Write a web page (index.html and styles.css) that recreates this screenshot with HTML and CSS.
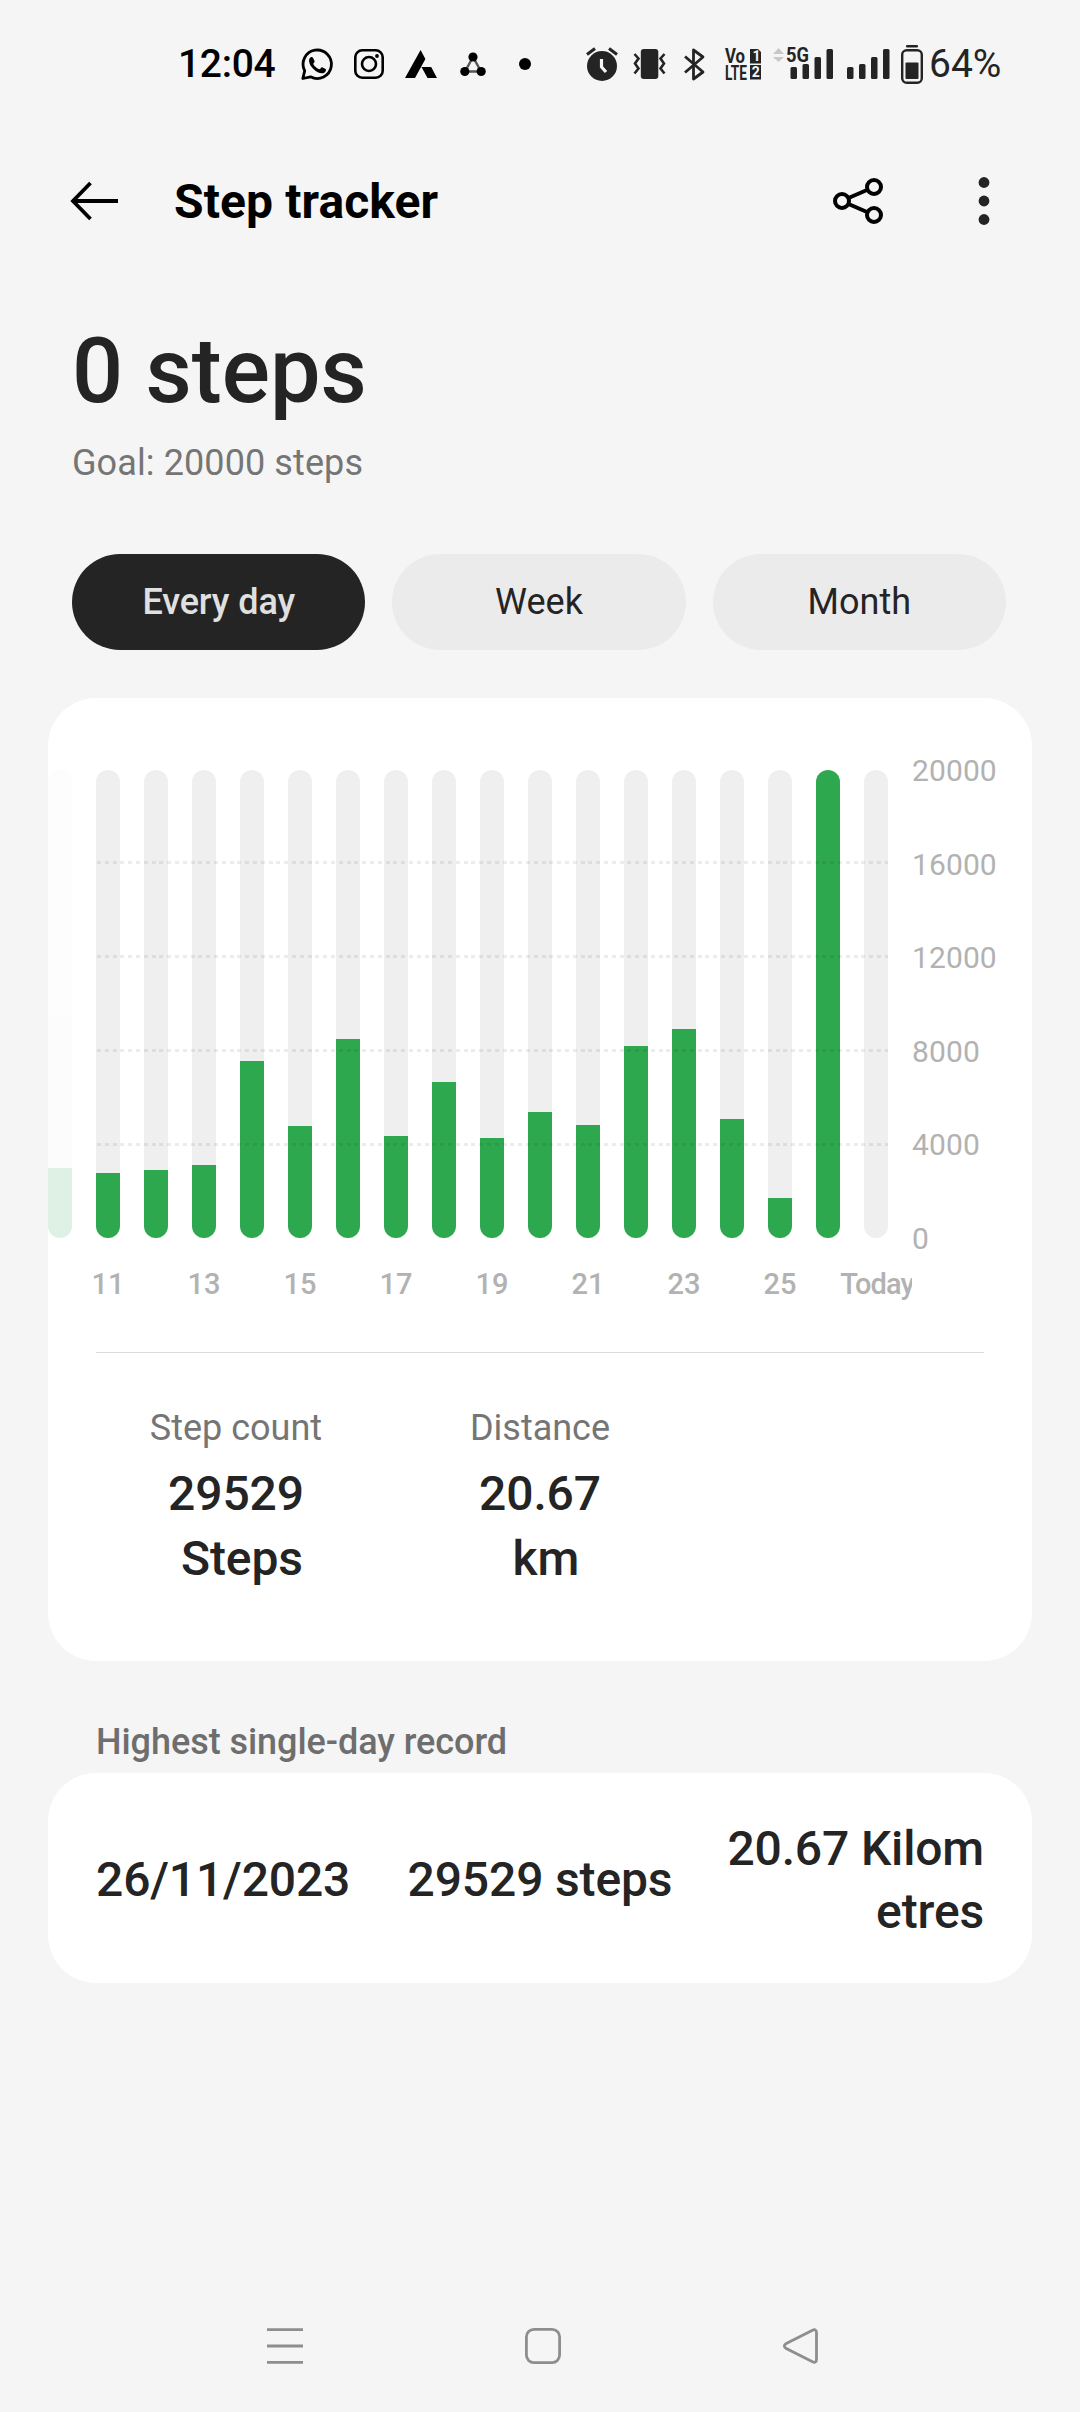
FILE: index.html
```html
<!DOCTYPE html>
<html lang="en">
<head>
    <meta charset="UTF-8">
    <meta name="viewport" content="width=device-width, initial-scale=1.0">
    <title>Step tracker</title>
    <link rel="stylesheet" href="styles.css">
</head>
<body>
    <div class="status-bar">
        <span class="clock">12:04</span>
        <div class="notifications">
            <svg width="32" height="32" viewBox="0 0 32 32">
                <path d="M1.800 30.500l1.900-7.600A14.200 14.200 0 1 1 9.600 28.800z" fill="none" stroke="#000" stroke-width="2.800" stroke-linejoin="round"/>
                <path d="M8.500 10.500c1-2 3-2 3.600-.6l1.500 3.400c.3 1-1.700 2-1.200 2.900 1.400 2.400 3.400 4.200 5.900 5.100 1 .3 1.900-2.400 2.800-2l3.500 1.700c1 .6.200 3-1.600 3.900-3 1.400-7-.5-10.300-3.600-3.300-3.200-5.600-7.300-4.200-10.800z"/>
            </svg>
            <svg width="30" height="30" viewBox="0 0 30 30" fill="none" stroke="#000" stroke-width="2.600">
                <rect x="1.300" y="1.300" width="27.400" height="27.400" rx="7"/>
                <circle cx="15" cy="15" r="7"/>
                <circle cx="23" cy="7" r="1.900" fill="#000" stroke="none"/>
            </svg>
            <svg width="32" height="28" viewBox="0 0 32 28">
                <path d="M0 28L15.600 0l4.800 9L10 28zM16.500 17h9.700L32 28H22.500z"/>
            </svg>
            <svg width="26" height="25" viewBox="0 0 26 25">
                <path d="M13 5L5 19.500h16z" fill="none" stroke="#555" stroke-width="2.400"/>
                <circle cx="13" cy="5" r="4.600"/>
                <circle cx="4.800" cy="19.500" r="4.600"/>
                <circle cx="21.200" cy="19.500" r="4.600"/>
            </svg>
            <span class="more-dot"></span>
        </div>
        <div class="system-icons">
            <svg class="alarm" width="32" height="34" viewBox="0 0 32 34">
                <circle cx="16" cy="19" r="15"/>
                <path d="M1 7.500L9 1.500M31 7.500L23 1.500" stroke="#242424" stroke-width="3"/>
                <path d="M15.500 12v8l4.500 5" fill="none" stroke="#f5f5f5" stroke-width="3.200"/>
            </svg>
            <svg class="vibrate" width="33" height="30" viewBox="0 0 33 30">
                <rect x="7.800" width="17.500" height="30" rx="3"/>
                <path d="M1.500 5L5.500 9.500 2 14.500 5.500 19.500 1.500 24.500M31.500 5L27.500 9.500 31 14.500 27.500 19.500 31.500 24.500" fill="none" stroke="#242424" stroke-width="2.600"/>
            </svg>
            <svg class="bluetooth" width="21" height="33" viewBox="0 0 21 33">
                <path d="M1 8.500l18 15.500L9.500 31V2L19 9 1 24.500" fill="none" stroke="#242424" stroke-width="2.800" stroke-linejoin="round"/>
            </svg>
            <svg class="volte" width="36" height="31" viewBox="0 0 36 31">
                <text x="0" y="14" textLength="20" lengthAdjust="spacingAndGlyphs">Vo</text>
                <text x="0" y="30.500" textLength="22" lengthAdjust="spacingAndGlyphs">LTE</text>
                <path d="M25 0h8l3 3v11.500H25zM25 16h11v14.500H25z"/>
                <text class="sim" x="27.500" y="12">1</text>
                <text class="sim" x="26.800" y="28">2</text>
            </svg>
            <svg class="signal-5g" width="61" height="34" viewBox="0 0 61 34">
                <path d="M0 8l5.500-6L11 8zM0 11h11l-5.500 5z" fill="#c8c8c8"/>
                <text x="13" y="16" textLength="23" lengthAdjust="spacingAndGlyphs">5G</text>
                <rect x="17.500" y="21" width="6.500" height="12" rx="1.500"/>
                <rect x="29.500" y="18" width="6.500" height="15" rx="1.500"/>
                <rect x="41.500" y="11" width="6.500" height="22" rx="1.500"/>
                <rect x="53.500" y="3" width="6.500" height="30" rx="1.500"/>
            </svg>
            <svg class="signal" width="43" height="30" viewBox="0 0 43 30">
                <rect x="0" y="18" width="6.500" height="12" rx="1.500"/>
                <rect x="12" y="15" width="6.500" height="15" rx="1.500"/>
                <rect x="24" y="8" width="6.500" height="22" rx="1.500"/>
                <rect x="36" y="0" width="6.500" height="30" rx="1.500"/>
            </svg>
            <svg class="battery" width="22" height="39" viewBox="0 0 22 39">
                <rect x="5" y="0" width="12" height="2.600" rx="1"/>
                <rect x="1.200" y="5.200" width="19.600" height="32.600" rx="4.500" fill="none" stroke="#242424" stroke-width="2.400"/>
                <rect x="4.500" y="17.500" width="13" height="16.500" rx="1"/>
            </svg>
            <span class="battery-level">64%</span>
        </div>
    </div>

    <header class="app-bar">
        <svg class="back" width="48" height="40" viewBox="0 0 48 40">
            <path d="M20.500 2L3 20l17.500 18M2 20h46" fill="none" stroke="#000" stroke-width="3.800"/>
        </svg>
        <h1>Step tracker</h1>
        <svg class="share" width="50" height="46" viewBox="0 0 50 46" fill="none" stroke="#000" stroke-width="4">
            <path d="M15.500 20L34 12M15.500 26L34 34"/>
            <circle cx="9" cy="23" r="7"/>
            <circle cx="41" cy="9" r="7"/>
            <circle cx="41" cy="37" r="7"/>
        </svg>
        <svg class="menu" width="12" height="48" viewBox="0 0 12 48">
            <circle cx="6" cy="5.500" r="5.400"/>
            <circle cx="6" cy="24" r="5.400"/>
            <circle cx="6" cy="42.500" r="5.400"/>
        </svg>
    </header>

    <main>
        <section class="summary">
            <div class="steps">0 steps</div>
            <div class="goal">Goal: 20000 steps</div>
        </section>

        <div class="tabs">
            <button class="tab active">Every day</button>
            <button class="tab">Week</button>
            <button class="tab">Month</button>
        </div>

        <section class="card chart-card">
            <div class="chart">
                <div class="bars">
                    <div class="bar past"><div class="fill" style="height: 70.5px"></div></div>
                    <div class="bar"><div class="fill" style="height: 65px"></div></div>
                    <div class="bar"><div class="fill" style="height: 68.5px"></div></div>
                    <div class="bar"><div class="fill" style="height: 73.5px"></div></div>
                    <div class="bar"><div class="fill" style="height: 177px"></div></div>
                    <div class="bar"><div class="fill" style="height: 112.5px"></div></div>
                    <div class="bar"><div class="fill" style="height: 199.5px"></div></div>
                    <div class="bar"><div class="fill" style="height: 102.5px"></div></div>
                    <div class="bar"><div class="fill" style="height: 156.5px"></div></div>
                    <div class="bar"><div class="fill" style="height: 100.5px"></div></div>
                    <div class="bar"><div class="fill" style="height: 126px"></div></div>
                    <div class="bar"><div class="fill" style="height: 113.5px"></div></div>
                    <div class="bar"><div class="fill" style="height: 192px"></div></div>
                    <div class="bar"><div class="fill" style="height: 209.5px"></div></div>
                    <div class="bar"><div class="fill" style="height: 119.5px"></div></div>
                    <div class="bar"><div class="fill" style="height: 40px"></div></div>
                    <div class="bar"><div class="fill" style="height: 468px"></div></div>
                    <div class="bar"></div>
                    <div class="grid-lines">
                        <i></i><i></i><i></i><i></i>
                    </div>
                </div>
                <div class="y-axis">
                    <span>20000</span>
                    <span>16000</span>
                    <span>12000</span>
                    <span>8000</span>
                    <span>4000</span>
                    <span>0</span>
                </div>
            </div>
            <div class="x-axis">
                <span>11</span>
                <span>13</span>
                <span>15</span>
                <span>17</span>
                <span>19</span>
                <span>21</span>
                <span>23</span>
                <span>25</span>
                <span class="today">Today</span>
            </div>
            <div class="stats">
                <div class="stat">
                    <div class="stat-label">Step count</div>
                    <div class="stat-value">29529<br>&nbsp;Steps</div>
                </div>
                <div class="stat">
                    <div class="stat-label">Distance</div>
                    <div class="stat-value">20.67<br>&nbsp;km</div>
                </div>
            </div>
        </section>

        <h2>Highest single-day record</h2>
        <section class="card record">
            <div>26/11/2023</div>
            <div class="record-steps">29529 steps</div>
            <div class="record-distance">20.67 Kilom<br>etres</div>
        </section>
    </main>

    <nav class="nav-bar">
        <svg width="36" height="36" viewBox="0 0 36 36">
            <path d="M0 1.700h36M0 18h36M0 34.300h36"/>
        </svg>
        <svg width="36" height="36" viewBox="0 0 36 36">
            <rect x="1.400" y="1.400" width="33.200" height="33.200" rx="7.500"/>
        </svg>
        <svg width="36" height="36" viewBox="0 0 36 36">
            <path d="M2.800 15.800L29.500 2.200Q33.500.5 33.500 5v26q0 4.500-4 2.800L2.800 20.200q-3-2.200 0-4.400z"/>
        </svg>
    </nav>
</body>
</html>
```
FILE: styles.css
```css
* {
    margin: 0;
    padding: 0;
    box-sizing: border-box;
}

body {
    width: 1080px;
    height: 2412px;
    display: flex;
    flex-direction: column;
    font-family: Roboto, sans-serif;
    background: #f5f5f5;
    color: #242424;
    overflow: hidden;
}

svg {
    display: block;
    flex-shrink: 0;
    overflow: visible;
}

/* Status bar */
.status-bar {
    height: 126px;
    display: flex;
    align-items: center;
    padding: 2px 70px 0 178px;
}

.clock {
    width: 123px;
    font-size: 39px;
    font-weight: 500;
    letter-spacing: -0.3px;
    color: #000;
}

.notifications {
    display: flex;
    align-items: center;
    gap: 21px;
}

.notifications svg:nth-child(4) {
    margin-left: 2px;
}

.more-dot {
    width: 12px;
    height: 12px;
    margin-left: 12px;
    border-radius: 50%;
    background: #000;
}

.system-icons {
    display: flex;
    align-items: center;
    margin-left: 55px;
    fill: #242424;
}

.vibrate {
    margin-left: 15px;
}

.bluetooth {
    margin-left: 18px;
}

.volte {
    margin-left: 20px;
    font-size: 20px;
    font-weight: 700;
}

.volte .sim {
    font-size: 14px;
    fill: #f5f5f5;
}

.signal-5g {
    margin-left: 12px;
    margin-top: -3px;
    font-size: 21px;
    font-weight: 700;
}

.signal {
    margin-left: 13px;
}

.battery {
    margin-left: 11px;
}

.battery-level {
    margin-left: 6px;
    font-size: 39px;
}

/* App bar */
.app-bar {
    height: 150px;
    display: flex;
    align-items: center;
    padding: 0 90px 0 70px;
}

h1 {
    margin-left: 56px;
    font-size: 48px;
    font-weight: 700;
    letter-spacing: 0.1px;
    color: #000;
}

.share {
    margin-left: auto;
}

.menu {
    margin-left: 95px;
    fill: #242424;
}

/* Summary */
.summary {
    padding: 41px 72px 0;
}

.steps {
    font-size: 90px;
    font-weight: 500;
    line-height: 110px;
}

.goal {
    margin-top: 12px;
    font-size: 36px;
    line-height: 48px;
    letter-spacing: 0.1px;
    color: #757575;
}

.tabs {
    display: flex;
    gap: 27px;
    padding: 67px 74px 48px 72px;
}

.tab {
    flex: 1;
    height: 96px;
    border: none;
    border-radius: 48px;
    background: #ebebeb;
    font-family: inherit;
    font-size: 36px;
    color: #242424;
}

.tab.active {
    background: #242424;
    font-weight: 500;
    letter-spacing: -0.1px;
    color: #e0e0e0;
}

.card {
    margin: 0 48px;
    border-radius: 48px;
    background: #fff;
}

/* Chart */
.chart-card {
    height: 963px;
    padding-top: 72px;
}

.chart {
    display: flex;
    height: 468px;
}

.bars {
    position: relative;
    display: flex;
    gap: 24px;
}

.bar {
    width: 24px;
    display: flex;
    align-items: flex-end;
    border-radius: 12px;
    background: #efefef;
    overflow: hidden;
}

.fill {
    width: 100%;
    background: #2ea84f;
}

.bar.past {
    opacity: 0.15;
}

.grid-lines {
    position: absolute;
    inset: 0 0 0 49px;
}

.grid-lines i {
    display: block;
    height: 3px;
    margin-top: 91px;
    background: repeating-linear-gradient(90deg, rgba(0, 0, 0, 0.075) 0 4px, transparent 4px 7.8px);
}

.y-axis {
    display: flex;
    flex-direction: column;
    justify-content: space-between;
    margin: -17px 0 -19px 24px;
    font-size: 30px;
    line-height: 36px;
    letter-spacing: 0.1px;
    color: #b2b2b2;
}

.x-axis {
    display: flex;
    width: 864px;
    margin-top: 28px;
    padding-left: 12px;
    overflow: hidden;
    font-size: 29px;
    font-weight: 500;
    line-height: 36px;
    color: #b2b2b2;
}

.x-axis span {
    flex: 0 0 96px;
    text-align: center;
}

.x-axis .today {
    padding-left: 2px;
    letter-spacing: -0.9px;
}

.stats {
    display: flex;
    margin: 50px 48px 0;
    padding-top: 53px;
    border-top: 1px solid #dcdcdc;
}

.stat {
    width: 304px;
    text-align: center;
}

.stat:first-child {
    margin-left: -12px;
}

.stat-label {
    font-size: 36px;
    line-height: 44px;
    color: #757575;
}

.stat-value {
    margin-top: 11px;
    font-size: 48px;
    font-weight: 500;
    line-height: 65px;
    letter-spacing: -0.1px;
}

/* Record */
h2 {
    margin: 58px 0 7px 96px;
    font-size: 36px;
    font-weight: 500;
    line-height: 47px;
    letter-spacing: -0.05px;
    color: #6e6e6e;
}

.record {
    height: 210px;
    display: grid;
    grid-template-columns: repeat(3, 1fr);
    align-items: center;
    padding: 3px 48px 0;
    font-size: 48px;
    font-weight: 500;
    line-height: 63px;
    letter-spacing: -0.15px;
}

.record-steps {
    text-align: center;
}

.record-distance {
    text-align: right;
}

/* Navigation bar */
.nav-bar {
    display: flex;
    justify-content: space-between;
    margin-top: auto;
    padding: 0 261px 48px 267px;
    fill: none;
    stroke: #8e8e8e;
    stroke-width: 2.8;
}
```
